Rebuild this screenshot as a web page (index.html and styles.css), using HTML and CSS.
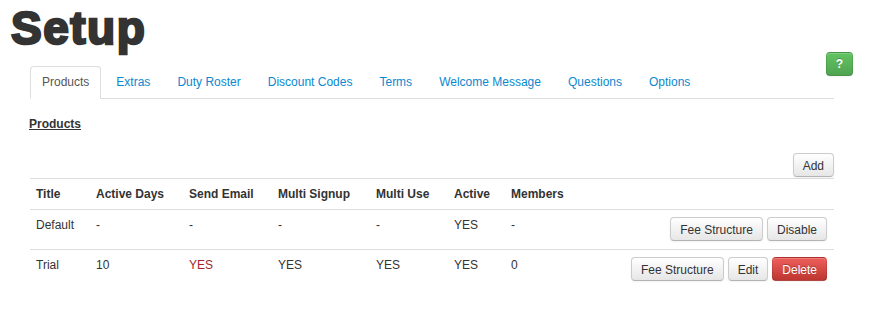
FILE: index.html
```html
<!DOCTYPE html>
<html lang="en">
<head>
<meta charset="utf-8">
<title>Setup</title>
<link rel="stylesheet" href="styles.css">
</head>
<body>
<div class="page">
  <h1 class="title">Setup</h1>
  <div class="helpbar"><button class="btn btn-success help">?</button></div>
  <div class="content">
    <ul class="tabs">
      <li class="active"><a href="#">Products</a></li>
      <li><a href="#">Extras</a></li>
      <li><a href="#">Duty Roster</a></li>
      <li><a href="#">Discount Codes</a></li>
      <li><a href="#">Terms</a></li>
      <li><a href="#">Welcome Message</a></li>
      <li><a href="#">Questions</a></li>
      <li><a href="#">Options</a></li>
    </ul>
    <h2 class="section">Products</h2>
    <div class="actions"><button class="btn">Add</button></div>
    <table class="grid">
      <colgroup>
        <col class="c1"><col class="c2"><col class="c3"><col class="c4"><col class="c5"><col class="c6"><col class="c7"><col>
      </colgroup>
      <thead>
        <tr>
          <th>Title</th><th>Active Days</th><th>Send Email</th><th>Multi Signup</th><th>Multi Use</th><th>Active</th><th>Members</th><th></th>
        </tr>
      </thead>
      <tbody>
        <tr>
          <td>Default</td><td>-</td><td>-</td><td>-</td><td>-</td><td>YES</td><td>-</td>
          <td><div class="rowbtns"><button class="btn">Fee Structure</button><button class="btn">Disable</button></div></td>
        </tr>
        <tr>
          <td>Trial</td><td>10</td><td class="red">YES</td><td>YES</td><td>YES</td><td>YES</td><td>0</td>
          <td><div class="rowbtns"><button class="btn">Fee Structure</button><button class="btn">Edit</button><button class="btn btn-danger">Delete</button></div></td>
        </tr>
      </tbody>
    </table>
  </div>
</div>
</body>
</html>
```
FILE: styles.css
```css
html, body {
  margin: 0;
  padding: 0;
  background: #fff;
}
body {
  font-family: "Liberation Sans", Arial, sans-serif;
  font-size: 12px;
  line-height: 16px;
  color: #333;
}
.page {
  padding-top: 5px;
}
.title {
  margin: 0 0 0 11px;
  font-size: 46px;
  line-height: 46px;
  font-weight: bold;
  letter-spacing: 1.5px;
  color: #333;
  -webkit-text-stroke: 2.4px #333;
}
.helpbar {
  display: flex;
  justify-content: flex-end;
  padding-right: 18px;
  margin-top: 1px;
  margin-bottom: -10px;
  height: 24px;
}
.content {
  margin: 0 37px 0 30px;
}
.tabs {
  list-style: none;
  margin: 0;
  padding: 0;
  display: flex;
  border-bottom: 1px solid #ddd;
}
.tabs li {
  margin: 0 3px -1px 0;
}
.tabs a {
  display: block;
  padding: 0 11px;
  line-height: 31px;
  border: 1px solid transparent;
  border-radius: 4px 4px 0 0;
  color: #0a88d0;
  text-decoration: none;
}
.tabs li.active a {
  color: #555;
  border-color: #ddd #ddd #fff #ddd;
  background: #fff;
}
.section {
  margin: 17px 0 0 -1px;
  font-size: 12px;
  line-height: 16px;
  font-weight: bold;
  text-decoration: underline;
  color: #333;
}
.actions {
  display: flex;
  justify-content: flex-end;
  margin-top: 21px;
}
.btn {
  font-family: "Liberation Sans", Arial, sans-serif;
  font-size: 12px;
  line-height: 16px;
  padding: 4px 9px 2px;
  height: 24px;
  color: #333;
  border: 1px solid #ccc;
  border-bottom-color: #b3b3b3;
  border-radius: 4px;
  background: linear-gradient(#ffffff, #e6e6e6);
  box-shadow: inset 0 1px 0 rgba(255,255,255,.2), 0 1px 2px rgba(0,0,0,.05);
  cursor: pointer;
  margin: 0;
}
.btn-danger {
  color: #fff;
  background: linear-gradient(#ee5f5b, #bd362f);
  border-color: rgba(0,0,0,.1) rgba(0,0,0,.1) rgba(0,0,0,.25);
  text-shadow: 0 -1px 0 rgba(0,0,0,.25);
}
.btn-success {
  color: #fff;
  background: linear-gradient(#62c462, #51a351);
  border-color: rgba(0,0,0,.1) rgba(0,0,0,.1) rgba(0,0,0,.25);
  text-shadow: 0 -1px 0 rgba(0,0,0,.25);
}
.help {
  width: 27px;
  height: 24px;
  padding: 0;
  font-weight: bold;
  text-align: center;
}
.grid {
  width: 100%;
  border-collapse: collapse;
  table-layout: fixed;
  margin-top: 1px;
}
.c1 { width: 60px; }
.c2 { width: 93px; }
.c3 { width: 89px; }
.c4 { width: 98px; }
.c5 { width: 78px; }
.c6 { width: 57px; }
.c7 { width: 95px; }
.grid th, .grid td {
  text-align: left;
  vertical-align: top;
  border-top: 1px solid #ddd;
  line-height: 16px;
}
.grid th {
  padding: 7px 6px;
  font-weight: bold;
}
.grid td {
  padding: 7px 6px 8px;
}
.grid td:last-child {
  padding-right: 7px;
}
.red {
  color: #a2272a;
}
.rowbtns {
  display: flex;
  justify-content: flex-end;
  gap: 4px;
}
```
